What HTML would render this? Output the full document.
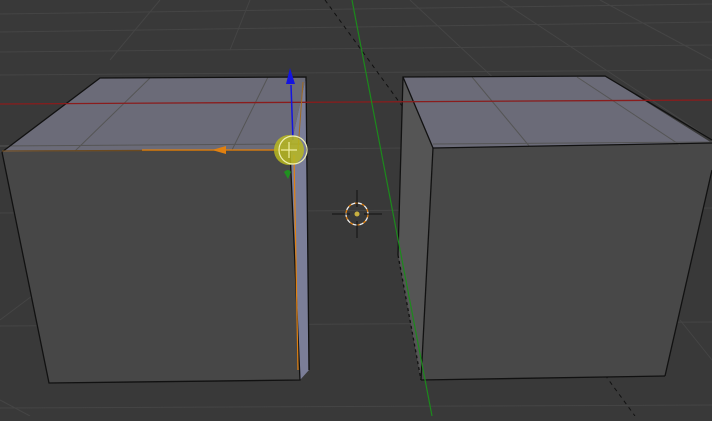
<!DOCTYPE html>
<html><head><style>html,body{margin:0;padding:0;background:#393939;overflow:hidden}</style></head><body>
<svg width="712" height="416" viewBox="0 0 712 416" xmlns="http://www.w3.org/2000/svg">
<rect width="712" height="416" fill="#393939"/>
<g stroke="#454545" stroke-width="1" fill="none">
<line x1="0" y1="14" x2="712" y2="4"/><line x1="0" y1="32" x2="712" y2="22"/><line x1="0" y1="52" x2="712" y2="45"/>
<line x1="0" y1="75" x2="712" y2="70"/><line x1="0" y1="152" x2="712" y2="145"/><line x1="0" y1="213" x2="712" y2="208"/>
<line x1="0" y1="326" x2="712" y2="322"/><line x1="0" y1="408" x2="712" y2="405"/>
<line x1="410" y1="0" x2="560" y2="140"/><line x1="500" y1="0" x2="712" y2="140"/><line x1="600" y1="0" x2="712" y2="60"/>
<line x1="250" y1="0" x2="230" y2="50"/><line x1="160" y1="0" x2="110" y2="60"/><line x1="680" y1="320" x2="712" y2="360"/>
<line x1="0" y1="320" x2="40" y2="290"/><line x1="0" y1="400" x2="30" y2="416"/>
</g>
<line x1="325" y1="0" x2="405" y2="110" stroke="#111" stroke-dasharray="4,4"/>
<line x1="605" y1="375" x2="635" y2="416" stroke="#111" stroke-dasharray="4,4"/>
<!-- right cube -->
<polygon points="403,77 433,148 421,380 398,255" fill="#555"/>
<polygon points="403,77 605,76 712,143 433,148" fill="#6b6b78"/>
<polygon points="433,148 712,143 712,170 665,376 421,380" fill="#484848"/>
<g stroke="#555" stroke-width="1"><line x1="472" y1="77" x2="530" y2="147"/><line x1="577" y1="77" x2="680" y2="145"/><line x1="433" y1="144" x2="712" y2="142"/></g>
<g stroke="#111" stroke-width="1.3" fill="none">
<polyline points="398,255 403,77 605,76 712,140"/><line x1="403" y1="77" x2="433" y2="148"/>
<line x1="433" y1="148" x2="712" y2="143"/><line x1="433" y1="148" x2="421" y2="380"/>
<line x1="421" y1="380" x2="665" y2="376"/><line x1="665" y1="376" x2="712" y2="170"/>
<line x1="398" y1="255" x2="421" y2="380" stroke-dasharray="3,3"/>
</g>
<!-- left cube -->
<polygon points="100,78 306,77 290,150 2,152" fill="#6b6b78"/>
<polygon points="290,150 306,77 309,370 300,380" fill="#7b7e98"/>
<polygon points="2,152 290,150 300,380 49,383" fill="#474747"/>
<g stroke="#555" stroke-width="1"><line x1="150" y1="78" x2="75" y2="151"/><line x1="268" y1="77" x2="232" y2="150"/><line x1="0" y1="146" x2="300" y2="144"/></g>
<g stroke="#111" stroke-width="1.3" fill="none">
<polyline points="2,152 100,78 306,77 309,370"/><polyline points="2,152 49,383 300,380 290,150"/>
</g>
<line x1="0" y1="104" x2="712" y2="100" stroke="#8a1c1c" stroke-width="1.3"/>
<line x1="352" y1="0" x2="432" y2="416" stroke="#1c8a1c" stroke-width="1.2"/>
<line x1="2" y1="151" x2="290" y2="150" stroke="#6b4a20" stroke-width="1.3"/>
<line x1="142" y1="150" x2="290" y2="150" stroke="#e08010" stroke-width="1.3"/>
<line x1="294" y1="155" x2="298" y2="370" stroke="#e08010" stroke-width="1.2"/>
<line x1="303" y1="82" x2="298" y2="150" stroke="#a06a20" stroke-width="1"/>
<polygon points="212,150 226,146 226,154" fill="#e08010"/>
<line x1="291" y1="85" x2="293" y2="140" stroke="#1414e0" stroke-width="1.5"/>
<polygon points="290,68 286,84 295,84" fill="#1414e0"/>
<path d="M284,172 q4,-4 7,0 l-3,7 z" fill="#209020"/>
<circle cx="289" cy="150" r="15" fill="#b8b820" opacity="0.85"/>
<circle cx="293" cy="150" r="14" fill="none" stroke="#f0f0b0" stroke-width="1.2"/>
<g stroke="#f0f0a0" stroke-width="1.2"><line x1="281" y1="150" x2="297" y2="150"/><line x1="289" y1="142" x2="289" y2="158"/></g>
<!-- 3D cursor -->
<circle cx="357" cy="214" r="11" fill="none" stroke="#e08010" stroke-width="1.3" stroke-dasharray="4,3"/>
<circle cx="357" cy="214" r="11" fill="none" stroke="#eee" stroke-width="1.3" stroke-dasharray="4,3" stroke-dashoffset="3.5"/>
<g stroke="#111" stroke-width="1"><line x1="332" y1="214" x2="350" y2="214"/><line x1="364" y1="214" x2="382" y2="214"/><line x1="357" y1="190" x2="357" y2="207"/><line x1="357" y1="221" x2="357" y2="238"/></g>
<circle cx="357" cy="214" r="2.5" fill="#c8b040"/>
</svg>
</body></html>
